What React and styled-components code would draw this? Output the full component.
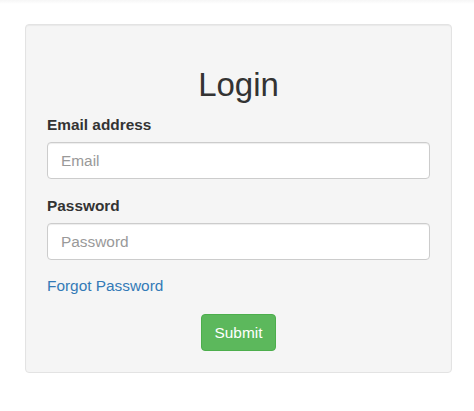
import React from 'react';
import styled, { createGlobalStyle } from 'styled-components';

const GlobalStyle = createGlobalStyle`
  html {
    background: #fff linear-gradient(#f6f6f6, #ffffff 4px) no-repeat;
    background-size: 100% 4px;
  }
  body {
    margin: 0;
    font-family: "Liberation Sans", Arial, sans-serif;
    font-size: 15.4px;
    line-height: 22px;
    color: #333;
  }
  * {
    box-sizing: border-box;
  }
`;

const Page = styled.div`
  padding: 24px 0 0 25px;
`;

const Well = styled.form`
  width: 427px;
  padding: 21px;
  background: #f5f5f5;
  border: 1px solid #e3e3e3;
  border-radius: 4px;
  box-shadow: inset 0 1px 1px rgba(0, 0, 0, 0.05);
`;

const Title = styled.h2`
  margin: 21px 0 11px;
  font-size: 33px;
  font-weight: 500;
  line-height: 1.1;
  text-align: center;
  color: #333;
`;

const FormGroup = styled.div`
  margin-bottom: ${(p) => (p.$last ? '0' : '16px')};
`;

const Label = styled.label`
  display: block;
  margin-bottom: 6px;
  font-weight: bold;
`;

const Input = styled.input`
  display: block;
  width: 100%;
  height: 37px;
  padding: 6px 13px;
  font-family: inherit;
  font-size: 15.4px;
  color: #555;
  background: #fff;
  border: 1px solid #ccc;
  border-radius: 4px;
  box-shadow: inset 0 1px 1px rgba(0, 0, 0, 0.075);

  &::placeholder {
    color: #999;
  }
`;

const ForgotLink = styled.a`
  display: block;
  margin-top: 15px;
  color: #337ab7;
  text-decoration: none;
`;

const Actions = styled.div`
  display: flex;
  justify-content: center;
  margin-top: 17px;
`;

const SubmitButton = styled.button`
  height: 37px;
  padding: 0 13px;
  font-family: inherit;
  font-size: 15.4px;
  color: #fff;
  background: #5cb85c;
  border: 1px solid #4cae4c;
  border-radius: 4px;
  cursor: pointer;
`;

export default function App() {
  return (
    <>
      <GlobalStyle />
      <Page>
        <Well onSubmit={(e) => e.preventDefault()}>
          <Title>Login</Title>
          <FormGroup>
            <Label htmlFor="email">Email address</Label>
            <Input id="email" type="email" placeholder="Email" />
          </FormGroup>
          <FormGroup $last>
            <Label htmlFor="password">Password</Label>
            <Input id="password" type="password" placeholder="Password" />
          </FormGroup>
          <ForgotLink href="#">Forgot Password</ForgotLink>
          <Actions>
            <SubmitButton type="submit">Submit</SubmitButton>
          </Actions>
        </Well>
      </Page>
    </>
  );
}
